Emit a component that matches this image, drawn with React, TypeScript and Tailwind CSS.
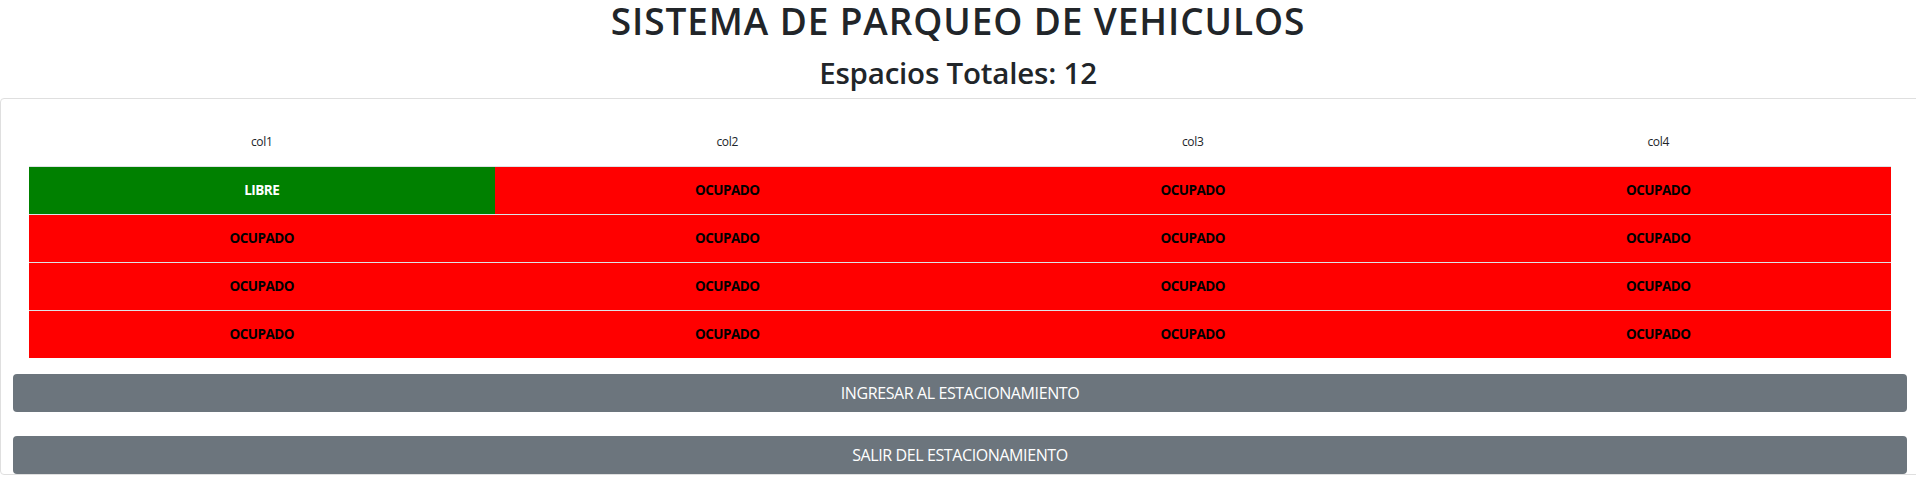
import React from "react";

type Spot = "LIBRE" | "OCUPADO";

const rows: Spot[][] = [
  ["LIBRE", "OCUPADO", "OCUPADO", "OCUPADO"],
  ["OCUPADO", "OCUPADO", "OCUPADO", "OCUPADO"],
  ["OCUPADO", "OCUPADO", "OCUPADO", "OCUPADO"],
  ["OCUPADO", "OCUPADO", "OCUPADO", "OCUPADO"],
];

export default function App() {
  return (
    <div className="w-full overflow-hidden bg-white text-[#212529] font-['Open_Sans',sans-serif]">
      {/* Encabezado */}
      <h1 className="text-center text-[37px] font-semibold leading-[41px] tracking-[0.9px]">
        SISTEMA DE PARQUEO DE VEHICULOS
      </h1>
      <h2 className="mt-[14px] text-center text-[29.5px] font-semibold leading-[36px] tracking-[-0.2px]">
        Espacios Totales: 12
      </h2>

      {/* Tarjeta */}
      <div className="mt-[7px] w-[1920px] rounded-[4px] border border-[#dfdfdf] px-[12px] pt-[19px]">
        <div className="px-[16px]">
          <table className="w-full table-fixed border-collapse">
            <thead>
              <tr className="h-[48px]">
                <th className="text-[12px] font-normal tracking-[-0.3px]">col1</th>
                <th className="text-[12px] font-normal tracking-[-0.3px]">col2</th>
                <th className="text-[12px] font-normal tracking-[-0.3px]">col3</th>
                <th className="text-[12px] font-normal tracking-[-0.3px]">col4</th>
              </tr>
            </thead>
            <tbody>
              {rows.map((row, i) => (
                <tr key={i} className="h-[48px] border-t border-[#dee2e6]">
                  {row.map((spot, j) => (
                    <td
                      key={j}
                      className={
                        spot === "LIBRE"
                          ? "bg-[#008000] text-center text-[13.5px] font-bold tracking-[-0.5px] text-white"
                          : "bg-[#ff0000] text-center text-[13.5px] font-bold tracking-[-0.5px] text-black"
                      }
                    >
                      {spot}
                    </td>
                  ))}
                </tr>
              ))}
            </tbody>
          </table>
        </div>

        <button className="mt-[16px] block h-[38px] w-full rounded-[4px] bg-[#6c757d] text-[16px] tracking-[-0.4px] text-white">
          INGRESAR AL ESTACIONAMIENTO
        </button>
        <button className="mt-[24px] block h-[38px] w-full rounded-[4px] bg-[#6c757d] text-[16px] tracking-[-0.4px] text-white">
          SALIR DEL ESTACIONAMIENTO
        </button>
      </div>
    </div>
  );
}
